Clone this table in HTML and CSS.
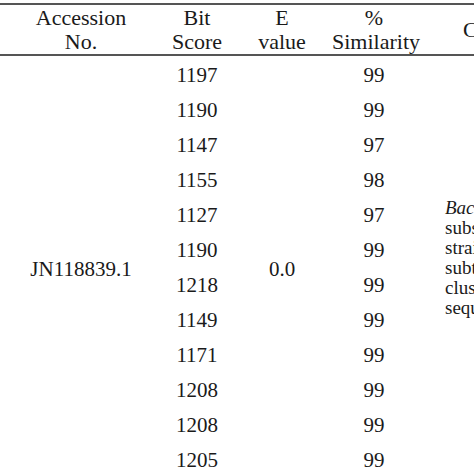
FILE: index.html
```html
<!DOCTYPE html>
<html>
<head>
<meta charset="utf-8">
<link rel="stylesheet" href="styles.css">
</head>
<body>
<div class="page">
<table class="blast">
  <colgroup>
    <col class="c-acc">
    <col class="c-bit">
    <col class="c-e">
    <col class="c-sim">
    <col class="c-desc">
  </colgroup>
  <thead>
    <tr>
      <th>Accession<br>No.</th>
      <th>Bit<br>Score</th>
      <th>E<br>value</th>
      <th>%<br>Similarity</th>
      <th class="desc-head">Closest match</th>
    </tr>
  </thead>
  <tbody>
    <tr>
      <td class="span-cell" rowspan="12">JN118839.1</td>
      <td>1197</td>
      <td class="span-cell" rowspan="12">0.0</td>
      <td>99</td>
      <td class="desc" rowspan="12"><em>Bacillus subtilis</em><br>subsp. subtilis<br>strain 168<br>subtilin gene<br>cluster, complete<br>sequence</td>
    </tr>
    <tr><td>1190</td><td>99</td></tr>
    <tr><td>1147</td><td>97</td></tr>
    <tr><td>1155</td><td>98</td></tr>
    <tr><td>1127</td><td>97</td></tr>
    <tr><td>1190</td><td>99</td></tr>
    <tr><td>1218</td><td>99</td></tr>
    <tr><td>1149</td><td>99</td></tr>
    <tr><td>1171</td><td>99</td></tr>
    <tr><td>1208</td><td>99</td></tr>
    <tr><td>1208</td><td>99</td></tr>
    <tr><td>1205</td><td>99</td></tr>
  </tbody>
</table>
</div>
</body>
</html>
```

FILE: styles.css
```css
html, body {
  margin: 0;
  padding: 0;
  background: #ffffff;
  overflow: hidden;
  width: 474px;
  height: 474px;
}

.page {
  padding-top: 3px;
  font-family: "Liberation Serif", "Times New Roman", serif;
  color: #1a1a1a;
}

.blast {
  border-collapse: collapse;
  table-layout: fixed;
  width: 666px;
  border-top: 2px solid #555555;
}

.c-acc { width: 162px; }
.c-bit { width: 70px; }
.c-e { width: 100px; }
.c-sim { width: 84px; }
.c-desc { width: 250px; }

.blast th {
  font-weight: normal;
  font-size: 22px;
  line-height: 23.5px;
  height: 47px;
  padding: 1px 0;
  text-align: center;
  vertical-align: middle;
  border-bottom: 2px solid #555555;
  white-space: nowrap;
}

.blast th.desc-head {
  text-align: left;
  padding-left: 47px;
}

.blast td {
  font-size: 21px;
  line-height: 24px;
  height: 32px;
  padding: 3px 0 0;
  text-align: center;
  vertical-align: middle;
  white-space: nowrap;
}

.blast td.span-cell {
  padding-top: 6px;
}

.blast td.desc {
  font-size: 19px;
  line-height: 20px;
  text-align: left;
  padding: 0 0 17px 29px;
}
```
